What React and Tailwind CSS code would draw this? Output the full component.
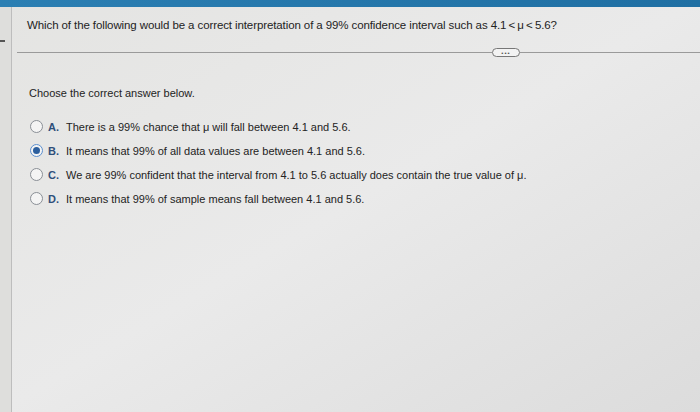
import React from 'react';

const options = [
  { letter: 'A.', text: 'There is a 99% chance that μ will fall between 4.1 and 5.6.' },
  { letter: 'B.', text: 'It means that 99% of all data values are between 4.1 and 5.6.', selected: true },
  { letter: 'C.', text: 'We are 99% confident that the interval from 4.1 to 5.6 actually does contain the true value of μ.' },
  { letter: 'D.', text: 'It means that 99% of sample means fall between 4.1 and 5.6.' },
];

function Radio({ selected }) {
  return (
    <span
      className={
        selected
          ? 'flex h-[13px] w-[13px] shrink-0 items-center justify-center rounded-full border border-[#5b8fcf] bg-[#f4f4f4]'
          : 'flex h-[13px] w-[13px] shrink-0 items-center justify-center rounded-full border border-[#8a8f96] bg-[#f4f4f4]'
      }
    >
      {selected && <span className="h-[7px] w-[7px] rounded-full bg-[#2c5f9e]" />}
    </span>
  );
}

export default function App() {
  return (
    <div
      className="flex h-[412px] w-[700px] flex-col overflow-hidden bg-gradient-to-br from-[#e4e4e2] via-[#eaeaea] to-[#dcdcdc] text-[#232323]"
      style={{ fontFamily: '"Liberation Sans", Arial, sans-serif' }}
    >
      <div className="h-[7px] w-full shrink-0 bg-gradient-to-r from-[#2b7fb3] to-[#1f6fa3]" />
      <div className="flex flex-1">
        <div className="relative w-[12px] shrink-0 border-r border-[#bdbdbd] bg-[#dededc]">
          <span className="absolute left-0 top-[33px] h-[2px] w-[5px] bg-[#555]" />
        </div>
        <div className="flex-1">
          <div className="pl-[15px] pt-[10px] text-[11.5px] tracking-[-0.1px]">
            Which of the following would be a correct interpretation of a 99% confidence interval such as 4.1&thinsp;&lt;&thinsp;μ&thinsp;&lt;&thinsp;5.6?
          </div>
          <div className="mt-[14px] flex items-center pl-[5px]">
            <div className="h-px w-[475px] bg-[#9a9a9a]" />
            <span className="flex h-[9px] w-[28px] items-center justify-center rounded-full border border-[#777] bg-[#f3f3f3] text-[6px] leading-none tracking-[1px] text-[#555]">
              •••
            </span>
            <div className="h-px flex-1 bg-[#9a9a9a]" />
          </div>
          <div className="pl-[17px] pt-[28px] text-[11px]">Choose the correct answer below.</div>
          <div className="mt-[18px] flex flex-col gap-[10px] pl-[18px] text-[11px]">
            {options.map((o) => (
              <div key={o.letter} className="flex h-[14px] items-center">
                <Radio selected={o.selected} />
                <span className="ml-[5px] w-[18px] font-bold text-[#2f4f7a]">{o.letter}</span>
                <span>{o.text}</span>
              </div>
            ))}
          </div>
        </div>
      </div>
    </div>
  );
}
